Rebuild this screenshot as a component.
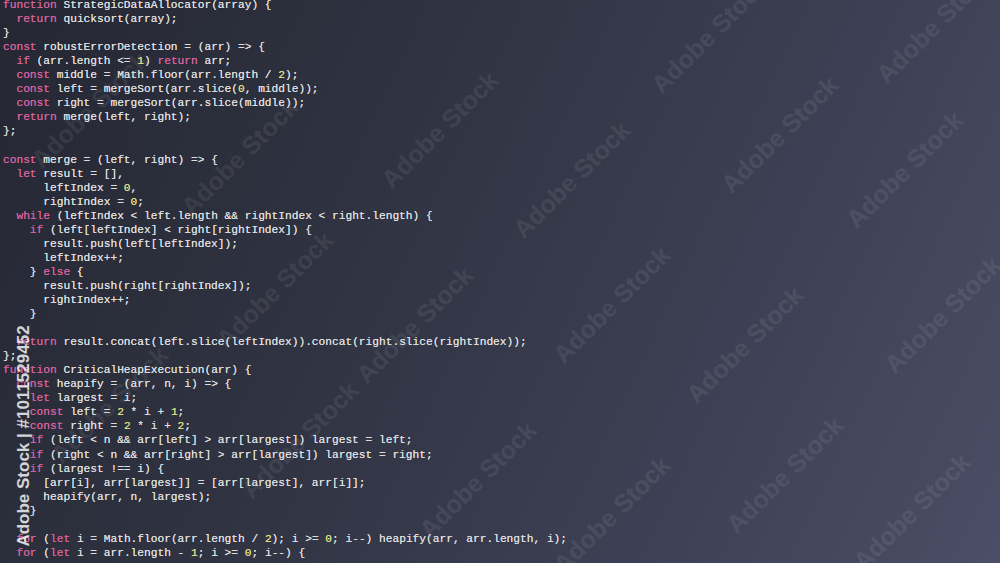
import React from "react";

const code = [
  "function StrategicDataAllocator(array) {",
  "  return quicksort(array);",
  "}",
  "const robustErrorDetection = (arr) => {",
  "  if (arr.length <= 1) return arr;",
  "  const middle = Math.floor(arr.length / 2);",
  "  const left = mergeSort(arr.slice(0, middle));",
  "  const right = mergeSort(arr.slice(middle));",
  "  return merge(left, right);",
  "};",
  "",
  "const merge = (left, right) => {",
  "  let result = [],",
  "      leftIndex = 0,",
  "      rightIndex = 0;",
  "  while (leftIndex < left.length && rightIndex < right.length) {",
  "    if (left[leftIndex] < right[rightIndex]) {",
  "      result.push(left[leftIndex]);",
  "      leftIndex++;",
  "    } else {",
  "      result.push(right[rightIndex]);",
  "      rightIndex++;",
  "    }",
  "",
  "  return result.concat(left.slice(leftIndex)).concat(right.slice(rightIndex));",
  "};",
  "function CriticalHeapExecution(arr) {",
  "  const heapify = (arr, n, i) => {",
  "    let largest = i;",
  "    const left = 2 * i + 1;",
  "    const right = 2 * i + 2;",
  "    if (left < n && arr[left] > arr[largest]) largest = left;",
  "    if (right < n && arr[right] > arr[largest]) largest = right;",
  "    if (largest !== i) {",
  "      [arr[i], arr[largest]] = [arr[largest], arr[i]];",
  "      heapify(arr, n, largest);",
  "    }",
  "",
  "  for (let i = Math.floor(arr.length / 2); i >= 0; i--) heapify(arr, arr.length, i);",
  "  for (let i = arr.length - 1; i >= 0; i--) {",
];

const keywords = ["function", "return", "const", "let", "if", "while", "else", "for"];

// watermark centres, eyeballed from the picture
const marks = [
  [710, 35],
  [935, 25],
  [440, 130],
  [572, 180],
  [780, 135],
  [905, 170],
  [240, 157],
  [90, 110],
  [275, 290],
  [415, 325],
  [612, 305],
  [745, 345],
  [943, 315],
  [110, 405],
  [300, 440],
  [478, 480],
  [612, 515],
  [785, 475],
  [912, 512],
];

const Line = ({ text }: { text: string }) => {
  const parts = text.split(/(\b(?:function|return|const|let|if|while|else|for)\b|\b\d+\b)/);
  return (
    <div className="h-[14.05px] whitespace-pre">
      {parts.map((p, i) =>
        keywords.includes(p) ? (
          <span key={i} className="text-[#d2609c]">
            {p}
          </span>
        ) : /^\d+$/.test(p) ? (
          <span key={i} className="text-[#dadd80]">
            {p}
          </span>
        ) : (
          <span key={i}>{p}</span>
        )
      )}
      {text === "" ? " " : null}
    </div>
  );
};

export default function App() {
  return (
    <div className="relative w-[1000px] h-[563px] overflow-hidden bg-[linear-gradient(115deg,#252733_0%,#2f3240_35%,#3d4054_70%,#4a4e66_100%)]">
      {/* code */}
      <div className="pl-[3px] -mt-[2px] font-['Liberation_Mono',monospace] text-[11.2px] leading-[14.05px] text-[#dcdcde] [text-shadow:0_0_0.5px_currentColor]">
        {code.map((l, i) => (
          <Line key={i} text={l} />
        ))}
      </div>

      {/* stock watermarks */}
      {marks.map(([x, y], i) => (
        <div
          key={i}
          className="absolute -translate-x-1/2 -translate-y-1/2 -rotate-45 whitespace-nowrap font-['Liberation_Sans',sans-serif] font-bold text-[25px] text-white/[0.07] pointer-events-none"
          style={{ left: x, top: y }}
        >
          Adobe Stock
        </div>
      ))}

      <div className="absolute left-[24px] top-[436px] -translate-x-1/2 -translate-y-1/2 -rotate-90 whitespace-nowrap font-['Liberation_Sans',sans-serif] font-bold text-[17px] text-white/80">
        Adobe Stock | #1011529452
      </div>
    </div>
  );
}
